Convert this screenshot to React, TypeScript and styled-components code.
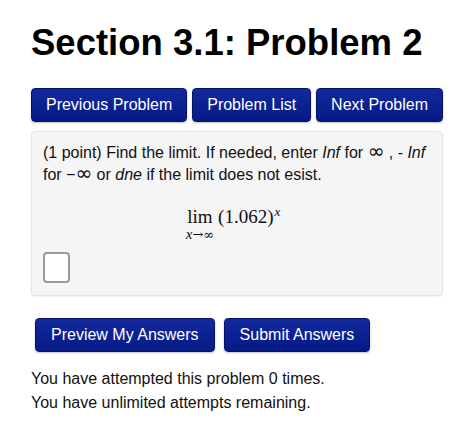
import styled, { createGlobalStyle } from 'styled-components'

const GlobalStyle = createGlobalStyle`
  body {
    margin: 0;
    background: #ffffff;
    font-family: 'Liberation Sans', Arial, sans-serif;
    color: #111111;
  }
`

const Page = styled.div`
  padding: 23px 31px 0 31px;
  width: 412px;
`

const Title = styled.h1`
  margin: 0;
  font-size: 36.5px;
  line-height: 40px;
  font-weight: 700;
  color: #000000;
`

const NavRow = styled.div`
  display: flex;
  gap: 5px;
  margin-top: 25px;
`

const Button = styled.button<{ $grow?: boolean }>`
  flex: ${(p) => (p.$grow ? '1 1 auto' : '0 0 auto')};
  height: 34px;
  padding: 0 ${(p) => (p.$grow ? '8px' : '15px')};
  border: 1px solid #06126a;
  border-radius: 4px;
  background: linear-gradient(#13299c, #061a86);
  box-shadow: 0 1px 2px rgba(0, 0, 0, 0.25);
  color: #ffffff;
  font-family: 'Liberation Sans', Arial, sans-serif;
  font-size: 16px;
  white-space: nowrap;
  cursor: pointer;
`

const ProblemBox = styled.div`
  margin-top: 9px;
  padding: 10px 11px 12px 11px;
  background: #f5f5f5;
  border: 1px solid #e4e4e4;
  border-radius: 4px;
  box-shadow: 0 1px 1px rgba(0, 0, 0, 0.05);
`

const Statement = styled.p`
  margin: 0;
  font-size: 16px;
  line-height: 22px;
  color: #111111;
`

const Sym = styled.span`
  font-family: 'DejaVu Sans', sans-serif;
  font-size: 20px;
  line-height: 0;
`

const MathRow = styled.div`
  display: flex;
  justify-content: center;
  margin-top: 21px;
  padding-right: 8px;
  font-family: 'Liberation Serif', 'Times New Roman', serif;
  color: #111111;
`

const Limit = styled.span`
  display: inline-flex;
  flex-direction: column;
  align-items: center;
  font-size: 19px;
  line-height: 20px;
`

const Under = styled.span`
  font-family: 'DejaVu Serif', 'Liberation Serif', serif;
  font-size: 13px;
  line-height: 13px;
  margin-top: 1px;
  i {
    font-family: 'Liberation Serif', serif;
    font-size: 15px;
    font-style: italic;
  }
`

const Expr = styled.span`
  font-size: 19px;
  line-height: 20px;
  margin-left: 4px;
  sup {
    font-style: italic;
    font-size: 13px;
    vertical-align: 7px;
    line-height: 0;
    margin-left: 1px;
  }
`

const AnswerInput = styled.input`
  display: block;
  box-sizing: border-box;
  width: 27px;
  height: 31px;
  margin-top: 11px;
  border: 2px solid #9a9a9a;
  border-radius: 4px;
  background: #ffffff;
`

const SubmitRow = styled.div`
  display: flex;
  gap: 9px;
  margin-top: 22px;
  padding-left: 4px;
`

const Attempts = styled.div`
  margin-top: 15px;
  font-size: 16px;
  line-height: 24px;
  color: #111111;
`

const App = () => {
  return (
    <>
      <GlobalStyle />
      <Page>
        <Title>Section 3.1: Problem 2</Title>
        <NavRow>
          <Button $grow>Previous Problem</Button>
          <Button $grow>Problem List</Button>
          <Button $grow>Next Problem</Button>
        </NavRow>
        <ProblemBox>
          <Statement>
            (1 point) Find the limit. If needed, enter <i>Inf</i> for <Sym>∞</Sym> , - <i>Inf</i> for −
            <Sym>∞</Sym> or <i>dne</i> if the limit does not esist.
          </Statement>
          <MathRow>
            <Limit>
              lim
              <Under>
                <i>x</i>→∞
              </Under>
            </Limit>
            <Expr>
              (1.062)<sup>x</sup>
            </Expr>
          </MathRow>
          <AnswerInput type="text" aria-label="answer" />
        </ProblemBox>
        <SubmitRow>
          <Button>Preview My Answers</Button>
          <Button>Submit Answers</Button>
        </SubmitRow>
        <Attempts>
          You have attempted this problem 0 times.
          <br />
          You have unlimited attempts remaining.
        </Attempts>
      </Page>
    </>
  )
}

export default App
